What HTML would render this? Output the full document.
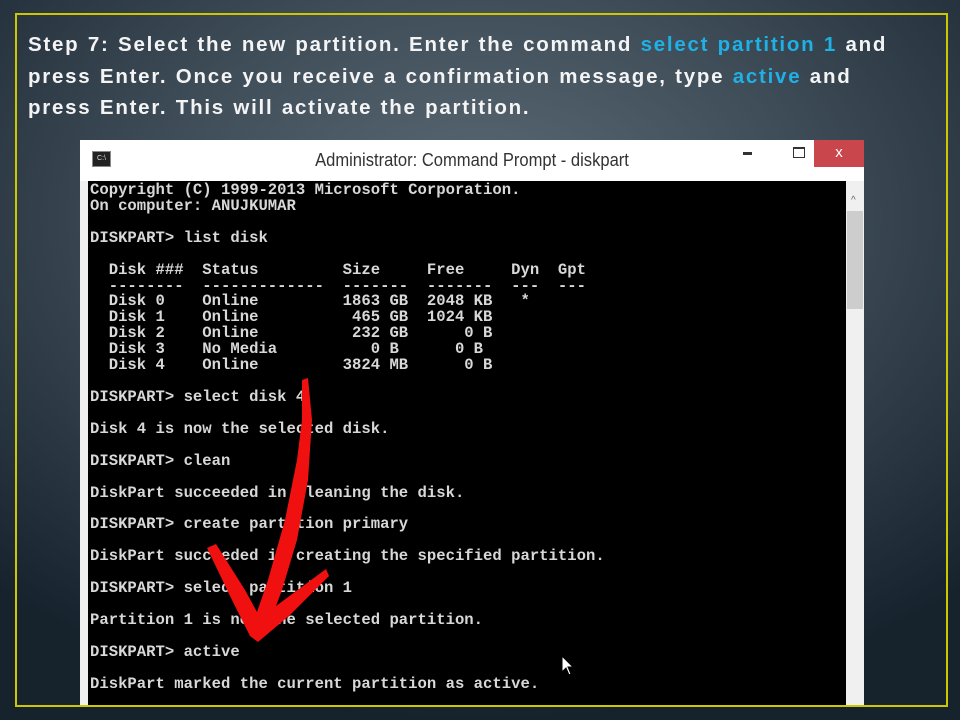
<!DOCTYPE html>
<html><head><meta charset="utf-8"><style>
html,body{margin:0;padding:0}
body{width:960px;height:720px;overflow:hidden;position:relative;background:radial-gradient(ellipse 75% 70% at 50% 30%,#5d6b76 0%,#3f4d59 45%,#25323e 80%,#16222c 100%);font-family:"Liberation Sans",sans-serif}
.frame{position:absolute;left:15px;top:13px;width:929px;height:690px;border:2px solid #cdc600}
.title{position:absolute;left:28px;top:29px;width:900px;color:#f4f4f4;font-weight:bold;font-size:20.5px;line-height:31.5px;letter-spacing:1.75px;word-spacing:1px;white-space:nowrap}
.c{color:#1fb0e6}
.win{position:absolute;left:80px;top:140px;width:784px;height:565px;background:#f0f0f0;overflow:hidden}
.tb{position:absolute;left:0;top:0;width:784px;height:41px;background:#fff}
.tt{position:absolute;left:0;width:784px;top:10px;text-align:center;font-size:18px;color:#333;transform:scaleX(.92)}
.x{position:absolute;left:734px;top:0;width:50px;height:27px;background:#c9464c;color:#fff;font-size:15px;text-align:center;line-height:26px}
.con{position:absolute;left:8px;top:41px;width:758px;height:530px;background:#000}
pre{margin:0;position:absolute;left:2px;top:2px;color:#d8d8d8;font-family:"Liberation Mono",monospace;font-weight:bold;font-size:15.6px;line-height:15.92px}
.sb{position:absolute;left:766px;top:41px;width:18px;height:530px;background:#f0f0f0}
</style></head><body>
<div class="frame"></div>
<div class="title">Step 7: Select the new partition. Enter the command <span class="c">select partition 1</span> and<br>press Enter. Once you receive a confirmation message, type <span class="c">active</span> and<br>press Enter. This will activate the partition.</div>
<div class="win">
<div class="tb">
<div style="position:absolute;left:12px;top:11px;width:17px;height:14px;background:#222;border:1px solid #888;color:#ddd;font-size:7px;line-height:14px;text-align:center">C:\</div>
<div class="tt">Administrator: Command Prompt - diskpart</div>
<div style="position:absolute;left:663px;top:12px;width:9px;height:3px;background:#333"></div>
<div style="position:absolute;left:713px;top:7px;width:10px;height:8px;border:1px solid #333;border-top-width:2px"></div>
<div class="x">x</div>
</div>
<div class="con"><pre>Copyright (C) 1999-2013 Microsoft Corporation.
On computer: ANUJKUMAR

DISKPART&gt; list disk

  Disk ###  Status         Size     Free     Dyn  Gpt
  --------  -------------  -------  -------  ---  ---
  Disk 0    Online         1863 GB  2048 KB   *
  Disk 1    Online          465 GB  1024 KB
  Disk 2    Online          232 GB      0 B
  Disk 3    No Media          0 B      0 B
  Disk 4    Online         3824 MB      0 B

DISKPART&gt; select disk 4

Disk 4 is now the selected disk.

DISKPART&gt; clean

DiskPart succeeded in cleaning the disk.

DISKPART&gt; create partition primary

DiskPart succeeded in creating the specified partition.

DISKPART&gt; select partition 1

Partition 1 is now the selected partition.

DISKPART&gt; active

DiskPart marked the current partition as active.</pre></div>
<div class="sb"><div style="position:absolute;left:5px;top:14px;font-size:10px;color:#666">^</div><div style="position:absolute;left:1px;top:30px;width:16px;height:98px;background:#cdcdcd"></div></div>
</div>
<svg style="position:absolute;left:0;top:0" width="960" height="720">
<polygon fill="#f01010" points="302,380 308,378 312,420 308,480 297,540 282,590 276,606 326,569 329,576 290,615 258,642 250,636 232,600 207,548 216,544 245,590 257,612 268,580 285,520 297,460 302,420"/>
<path d="M562,656 L562,672 L566,668 L569,675 L571,674 L568,667 L573,667 Z" fill="#fff" stroke="#000" stroke-width="1"/>
</svg>
</body></html>
